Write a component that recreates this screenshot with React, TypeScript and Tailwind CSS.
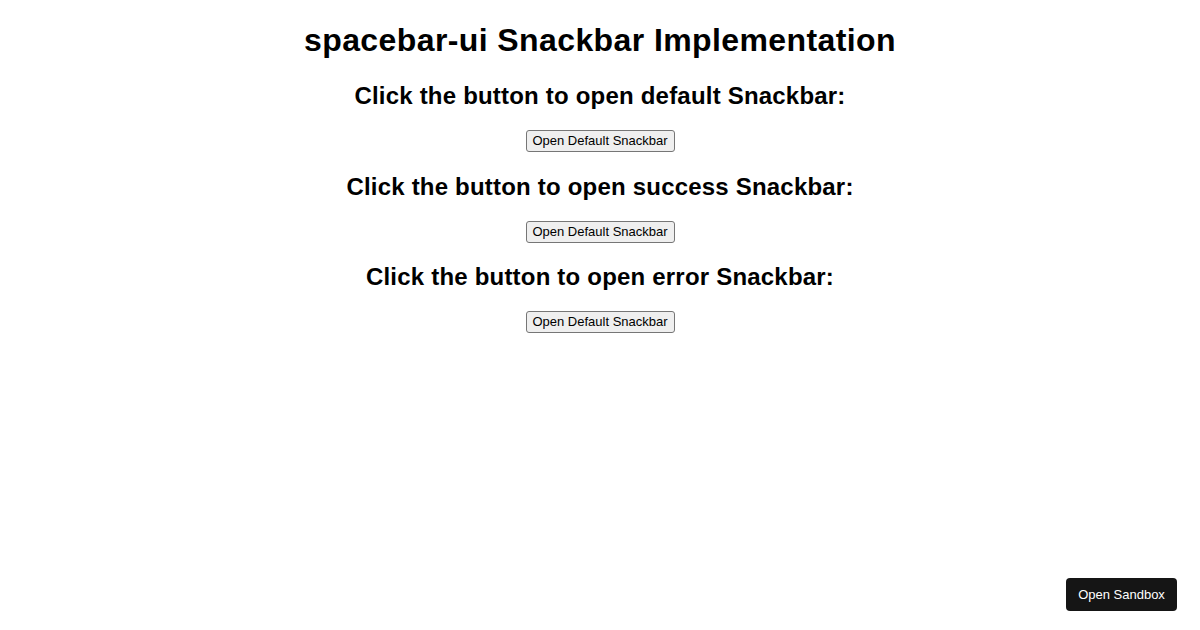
export default function App() {
  const sections = ["default", "success", "error"];
  return (
    <div className="relative h-[630px] w-full bg-white text-black font-['Liberation_Sans',Arial,sans-serif]">
      <div className="text-center">
        <h1 className="pt-[22px] mb-[23px] text-[32px] leading-[37px] font-bold tracking-[0.4px]">
          spacebar-ui Snackbar Implementation
        </h1>
        {sections.map((kind) => (
          <div key={kind}>
            <h2 className="text-[24px] leading-[28px] font-bold tracking-[0.2px] mb-[20px]">
              Click the button to open {kind} Snackbar:
            </h2>
            <div className="mb-[20.5px] h-[22px] leading-[22px]">
              <button className="w-[149px] h-[22px] text-[13px] leading-[18px] bg-[#efefef] border border-[#767676] rounded-[3px] text-black font-['Liberation_Sans',Arial,sans-serif] align-top whitespace-nowrap">
                Open Default Snackbar
              </button>
            </div>
          </div>
        ))}
      </div>
      <button className="absolute right-[23px] bottom-[19px] h-[33px] w-[111px] rounded-[4px] bg-[#151515] text-white text-[13px] font-['Liberation_Sans',Arial,sans-serif]">
        Open Sandbox
      </button>
    </div>
  );
}
